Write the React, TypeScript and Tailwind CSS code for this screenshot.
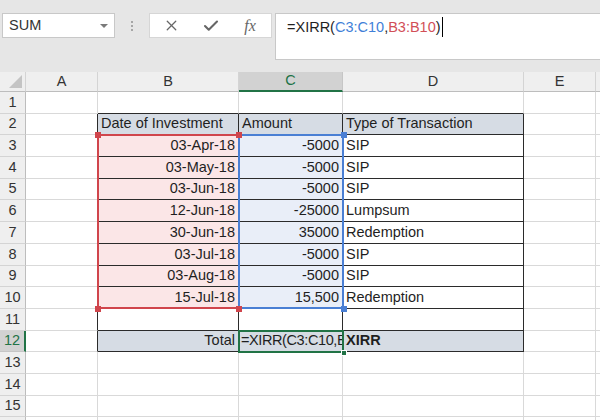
import React from "react";
import { X, Check } from "lucide-react";

const cols = [
  { name: "", w: "w-[26px]" },
  { name: "A", w: "w-[72px]" },
  { name: "B", w: "w-[141px]" },
  { name: "C", w: "w-[104px]" },
  { name: "D", w: "w-[181px]" },
  { name: "E", w: "w-[72px]" },
  { name: "", w: "w-[72px]" },
];

const rowH = [
  "h-[22px]", "h-[21px]", "h-[22px]", "h-[22px]", "h-[21px]", "h-[22px]", "h-[22px]", "h-[22px]",
  "h-[21px]", "h-[22px]", "h-[22px]", "h-[21px]", "h-[22px]", "h-[22px]", "h-[21px]", "h-[22px]",
];

const data: Record<number, [string, string, string]> = {
  2: ["Date of Investment", "Amount", "Type of Transaction"],
  3: ["03-Apr-18", "-5000", "SIP"],
  4: ["03-May-18", "-5000", "SIP"],
  5: ["03-Jun-18", "-5000", "SIP"],
  6: ["12-Jun-18", "-25000", "Lumpsum"],
  7: ["30-Jun-18", "35000", "Redemption"],
  8: ["03-Jul-18", "-5000", "SIP"],
  9: ["03-Aug-18", "-5000", "SIP"],
  10: ["15-Jul-18", "15,500", "Redemption"],
  11: ["", "", ""],
  12: ["Total", "=XIRR(C3:C10,B", "XIRR"],
};

function Cell({ row, col }: { row: number; col: number }) {
  const inTable = row >= 2 && row <= 12 && col >= 2 && col <= 4;
  const darkRight = row >= 2 && row <= 12 && col >= 1 && col <= 4;
  const darkBottom = row >= 1 && row <= 12 && col >= 2 && col <= 4;
  let bg = "bg-white";
  if (inTable && (row === 2 || row === 12)) bg = "bg-[#d6dce4]";
  else if (inTable && row >= 3 && row <= 10 && col === 2) bg = "bg-[#fbe6e7]";
  else if (inTable && row >= 3 && row <= 10 && col === 3) bg = "bg-[#e9eef8]";

  const d = data[row];
  let text = "";
  let extra = "justify-start";
  if (inTable && d) {
    text = d[col - 2];
    if (row !== 2 && col !== 4) extra = "justify-end";
    if (row === 12 && col === 3) extra = "justify-start tracking-[-0.4px] pl-[2px]";
    if (row === 12 && col === 4) extra = "justify-start font-bold";
  }

  return (
    <div
      className={`${cols[col].w} shrink-0 h-full flex items-center overflow-hidden whitespace-nowrap px-[3px] border-r border-b ${bg} ${extra} ${
        darkRight ? "border-r-[#2b2b2b]" : "border-r-[#d9d9d9]"
      } ${darkBottom ? "border-b-[#2b2b2b]" : "border-b-[#d9d9d9]"}`}
    >
      {text}
    </div>
  );
}

function Handle({ className }: { className: string }) {
  return <div className={`absolute w-[6px] h-[6px] ${className}`} />;
}

export default function App() {
  const rows = Array.from({ length: 16 }, (_, i) => i + 1);
  return (
    <div className="w-[600px] h-[420px] overflow-hidden bg-white text-[#1f1f1f] font-['Liberation_Sans',Arial,sans-serif] text-[14.5px]">
      {/* formula bar */}
      <div className="h-[72px] bg-[#e6e6e6] flex items-start pt-[13px] pl-[2px]">
        <div className="w-[113px] h-[25px] bg-white border border-[#c8c8c8] flex items-center justify-between pl-[6px] pr-[6px] text-[14.5px] text-[#333]">
          <span>SUM</span>
          <span className="w-0 h-0 border-l-[4px] border-r-[4px] border-t-[4px] border-l-transparent border-r-transparent border-t-[#7a7a7a]" />
        </div>
        <div className="w-[34px] h-[25px] flex flex-col items-center justify-center gap-[2px]">
          <span className="w-[2px] h-[2px] bg-[#a6a6a6]" />
          <span className="w-[2px] h-[2px] bg-[#a6a6a6]" />
          <span className="w-[2px] h-[2px] bg-[#a6a6a6]" />
        </div>
        <div className="w-[123px] h-[25px] bg-white border border-[#d6d6d6] flex items-center text-[#666]">
          <div className="w-[42px] flex justify-center">
            <X size={17} strokeWidth={1.8} />
          </div>
          <div className="w-[38px] flex justify-center">
            <Check size={18} strokeWidth={2.8} />
          </div>
          <div className="w-[40px] flex justify-center font-['Liberation_Serif',serif] italic text-[16px] text-[#666]">
            fx
          </div>
        </div>
        <div className="ml-[3px] flex-1 h-[47px] bg-white border border-[#c8c8c8] border-r-0 pl-[11px] pt-[3px] text-[14.5px] flex items-start">
          <span className="leading-[20px]">=XIRR(</span>
          <span className="leading-[20px] text-[#3f7fd8]">C3:C10</span>
          <span className="leading-[20px]">,</span>
          <span className="leading-[20px] text-[#d24f57]">B3:B10</span>
          <span className="leading-[20px]">)</span>
          <span className="w-[1px] h-[20px] bg-black ml-[1px]" />
        </div>
      </div>

      {/* sheet */}
      <div className="relative">
        <div className="flex h-[20px]">
          {cols.map((c, i) => (
            <div
              key={i}
              className={`${c.w} shrink-0 h-full flex items-center justify-center border-r border-b ${
                i === 3
                  ? "bg-[#d2d2d2] text-[#217346] border-b-2 border-b-[#217346] border-r-[#c6c6c6]"
                  : "bg-[#efefef] text-[#333] border-r-[#d4d4d4] border-b-[#bdbdbd]"
              } ${i === 0 ? "items-end justify-end pr-[3px] pb-[3px]" : ""}`}
            >
              {i === 0 ? (
                <svg width="13" height="13" viewBox="0 0 13 13">
                  <polygon points="13,0 13,13 0,13" fill="#c4c4c4" />
                </svg>
              ) : (
                c.name
              )}
            </div>
          ))}
        </div>
        {rows.map((r, ri) => (
          <div key={r} className={`flex ${rowH[ri]}`}>
            <div
              className={`w-[26px] shrink-0 h-full flex items-center justify-center border-b ${
                r === 12
                  ? "bg-[#d2d2d2] text-[#217346] border-r-2 border-r-[#217346] border-b-[#c6c6c6]"
                  : "bg-[#efefef] text-[#333] border-r border-r-[#bdbdbd] border-b-[#d4d4d4]"
              }`}
            >
              {r < 16 ? r : ""}
            </div>
            {cols.slice(1).map((_, ci) => (
              <Cell key={ci} row={r} col={ci + 1} />
            ))}
          </div>
        ))}

        {/* range highlights */}
        <div className="absolute left-[97px] top-[62px] w-[143px] h-[175px] border-2 border-[#d0454c]" />
        <div className="absolute left-[238px] top-[62px] w-[106px] h-[175px] border-2 border-[#4a7fd4]" />
        <Handle className="left-[95px] top-[60px] bg-[#d0454c]" />
        <Handle className="left-[95px] top-[234px] bg-[#d0454c]" />
        <Handle className="left-[236px] top-[60px] bg-[#d0454c]" />
        <Handle className="left-[236px] top-[234px] bg-[#d0454c]" />
        <Handle className="left-[341px] top-[60px] bg-[#4a7fd4]" />
        <Handle className="left-[341px] top-[234px] bg-[#4a7fd4]" />

        {/* active cell C12 */}
        <div className="absolute left-[238px] top-[258px] w-[106px] h-[23px] border-2 border-[#217346]" />
        <Handle className="left-[341px] top-[278px] w-[5px] h-[5px] bg-[#217346] border border-white" />
      </div>
    </div>
  );
}
